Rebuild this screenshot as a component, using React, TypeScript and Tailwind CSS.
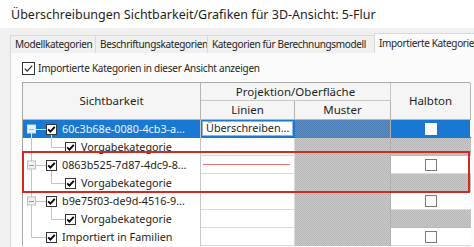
import React from 'react';

const GRAY_HATCH =
  'bg-[#c0c0c0] bg-[image:repeating-conic-gradient(#b8b8b8_0_25%,#c8c8c8_0_50%)] bg-[length:2px_2px]';
const BLUE_HATCH =
  'bg-[#5685bb] bg-[image:repeating-conic-gradient(#4d7db5_0_25%,#5e8dc3_0_50%)] bg-[length:2px_2px]';

type Row = {
  kind: 'parent' | 'child' | 'leaf';
  label: string;
  selected?: boolean;
  first?: boolean;
  redLine?: boolean;
};

const rows: Row[] = [
  { kind: 'parent', label: '60c3b68e-0080-4cb3-a...', selected: true, first: true },
  { kind: 'child', label: 'Vorgabekategorie' },
  { kind: 'parent', label: '0863b525-7d87-4dc9-8...', redLine: true },
  { kind: 'child', label: 'Vorgabekategorie' },
  { kind: 'parent', label: 'b9e75f03-de9d-4516-9...' },
  { kind: 'child', label: 'Vorgabekategorie' },
  { kind: 'leaf', label: 'Importiert in Familien' },
];

function TreeCheck() {
  return (
    <svg width="11" height="11" viewBox="0 0 11 11" className="shrink-0">
      <rect x="0.5" y="0.5" width="10" height="10" fill="#fff" stroke="#333" />
      <path d="M2.2 5.4 L4.4 7.7 L8.8 2.9" fill="none" stroke="#000" strokeWidth="1.8" />
    </svg>
  );
}

function TreeLines({ row }: { row: Row }) {
  const line = row.selected ? '#d6e6f7' : '#c4c4c4';
  return (
    <svg width="60" height="18" viewBox="0 0 60 18" className="absolute left-0 top-0">
      {row.kind === 'parent' && (
        <>
          {!row.first && <line x1="8.5" y1="0" x2="8.5" y2="5" stroke={line} />}
          <line x1="8.5" y1="13" x2="8.5" y2="18" stroke={line} />
          <line x1="13" y1="9.5" x2="23" y2="9.5" stroke={line} />
          <line x1="28.5" y1="15" x2="28.5" y2="18" stroke={line} />
          <rect
            x="4.5"
            y="5"
            width="8"
            height="8"
            fill={row.selected ? '#e9f1fa' : '#f2f2f2'}
            stroke={row.selected ? '#cfe0f3' : '#bdbdbd'}
          />
          <line x1="6" y1="9.5" x2="11" y2="9.5" stroke={row.selected ? '#9db8d6' : '#9a9a9a'} />
        </>
      )}
      {row.kind === 'child' && (
        <>
          <line x1="8.5" y1="0" x2="8.5" y2="18" stroke={line} />
          <line x1="28.5" y1="0" x2="28.5" y2="9.5" stroke={line} />
          <line x1="28.5" y1="9.5" x2="42" y2="9.5" stroke={line} />
        </>
      )}
      {row.kind === 'leaf' && (
        <>
          <line x1="8.5" y1="0" x2="8.5" y2="9.5" stroke={line} />
          <line x1="8.5" y1="9.5" x2="23" y2="9.5" stroke={line} />
        </>
      )}
    </svg>
  );
}

function TableRow({ row }: { row: Row }) {
  const sel = row.selected;
  const isChild = row.kind === 'child';
  return (
    <div className={`grid h-[18px] grid-cols-[178px_94px_96px_80px] ${sel ? 'bg-[#1979d2]' : ''}`}>
      <div className="relative flex items-center border-r border-[#c8c8c8]">
        <TreeLines row={row} />
        <div className={`flex items-center gap-[5px] ${isChild ? 'pl-[42px]' : 'pl-[23px]'}`}>
          <TreeCheck />
          <span className={`whitespace-nowrap ${sel ? 'text-[#eaf3ff]' : 'text-[#1e1e1e]'}`}>{row.label}</span>
        </div>
      </div>
      <div className={`relative border-r border-b ${sel ? 'border-[#1979d2]' : 'border-[#d9d9d9] bg-white'}`}>
        {sel && (
          <div className="absolute inset-x-[1px] inset-y-[1px] flex items-center border border-[#8db6e2] bg-white pl-[3px] text-[#1e1e1e]">
            Überschreiben...
          </div>
        )}
        {row.redLine && <div className="absolute left-[2px] right-[4px] top-[8px] h-px bg-[#e07070]" />}
      </div>
      <div className={`border-r border-[#b0b0b0] ${sel ? BLUE_HATCH : GRAY_HATCH}`} />
      <div
        className={`flex items-center justify-center border-b ${
          sel ? 'border-[#1979d2]' : isChild ? `${GRAY_HATCH} border-[#b8b8b8]` : 'bg-white border-[#d9d9d9]'
        }`}
      >
        {!isChild &&
          (sel ? (
            <div className="h-[12px] w-[12px] bg-white" />
          ) : (
            <div className="h-[12px] w-[12px] border border-[#7a7a7a] bg-white" />
          ))}
      </div>
    </div>
  );
}

export default function App() {
  const tabs = [
    { label: 'Modellkategorien', w: 'w-[85px]' },
    { label: 'Beschriftungskategorien', w: 'w-[112px]' },
    { label: 'Kategorien für Berechnungsmodell', w: 'w-[167px]' },
  ];

  return (
    <div
      className="relative h-[247px] w-[474px] overflow-hidden bg-[#f0f0f0] text-[#1e1e1e]"
      style={{ fontFamily: '"Noto Sans", "Open Sans", sans-serif' }}
    >
      <div className="h-[28px] bg-white pl-[11px] pt-[6px] text-[12.5px] leading-[18px] whitespace-nowrap">
        Überschreibungen Sichtbarkeit/Grafiken für 3D-Ansicht: 5-Flur
      </div>

      <div className="mt-[5px] flex h-[20px] items-end pl-[10px] text-[10px] tracking-[-0.35px]">
        {tabs.map((t) => (
          <div
            key={t.label}
            className={`${t.w} flex h-[18px] items-center border-l border-t border-[#d9d9d9] pl-[4px] whitespace-nowrap`}
          >
            {t.label}
          </div>
        ))}
        <div className="flex h-[20px] min-w-0 flex-1 items-center overflow-hidden border-l border-t border-[#d9d9d9] bg-[#fbfbfb] pl-[4px] whitespace-nowrap">
          Importierte Kategorien
        </div>
      </div>

      <div className="ml-[10px] h-[200px] border-l border-[#d9d9d9] bg-[#fbfbfb] pl-[11px]">
        <div className="flex h-[29px] items-center gap-[3px] pt-[1px] text-[10px] tracking-[-0.25px]">
          <svg width="13" height="13" viewBox="0 0 13 13">
            <rect x="0.5" y="0.5" width="12" height="12" fill="#fff" stroke="#333" />
            <path d="M2.8 6.6 L5.2 9.2 L10.2 3.6" fill="none" stroke="#222" strokeWidth="1.1" />
          </svg>
          <span className="whitespace-nowrap">Importierte Kategorien in dieser Ansicht anzeigen</span>
        </div>

        <div className="w-[448px] border-l border-t border-[#a8a8a8] bg-white text-[10.8px]">
          <div className="grid grid-cols-[178px_94px_96px_80px] grid-rows-[18px_19px] bg-[#f5f5f5] text-[11.5px]">
            <div className="row-span-2 flex items-center justify-center border-b border-r border-[#b4b4b4]">
              Sichtbarkeit
            </div>
            <div className="col-span-2 flex items-center justify-center border-b border-r border-[#c8c8c8]">
              Projektion/Oberfläche
            </div>
            <div className="row-span-2 flex items-center justify-center border-b border-r border-[#b4b4b4]">
              Halbton
            </div>
            <div className="flex items-center justify-center border-b border-r border-[#b4b4b4]">Linien</div>
            <div className="flex items-center justify-center border-b border-r border-[#b4b4b4]">Muster</div>
          </div>
          {rows.map((r, i) => (
            <TableRow key={i} row={r} />
          ))}
        </div>
      </div>

      <div className="pointer-events-none absolute left-[22px] top-[151px] h-[42px] w-[448px] border-2 border-[#d22a20]" />
    </div>
  );
}
